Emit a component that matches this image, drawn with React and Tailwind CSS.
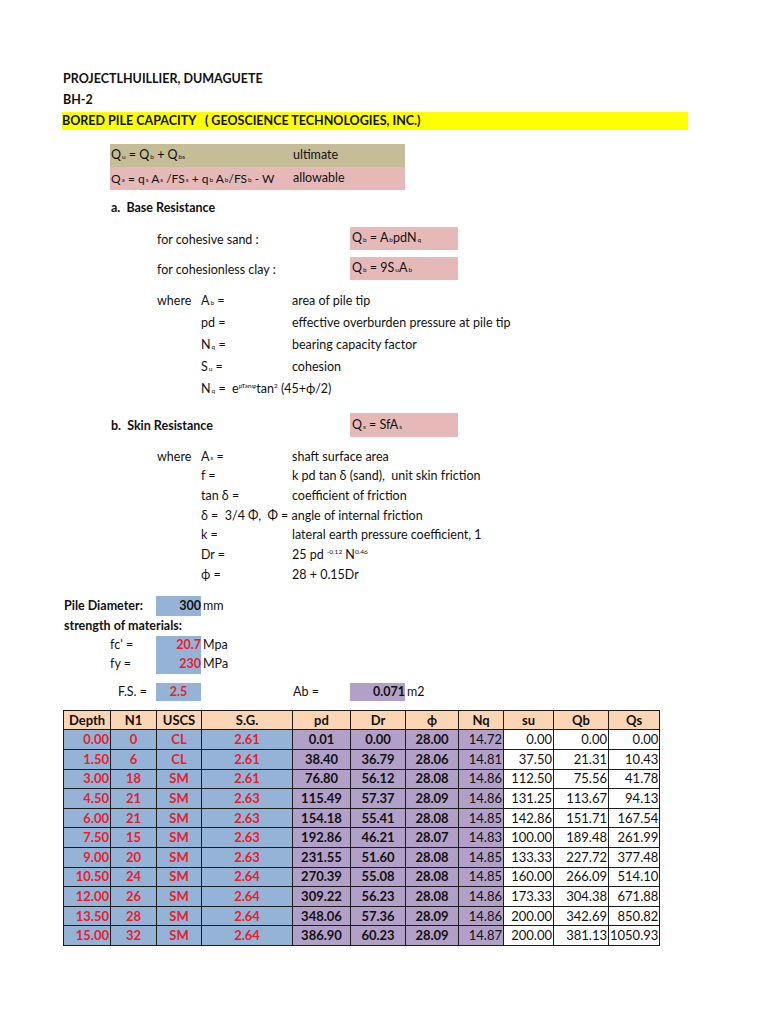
import React from 'react';

const GRID = 'grid grid-cols-[47px_46px_45px_91px_58px_55px_53px_45px_50px_55px_51px_29px]';

const RED = 'text-[#e8202a]';

function Row({ className = '', children }) {
  return <div className={`${GRID} ${className}`}>{children}</div>;
}

function Cell({ className = '', children }) {
  return <div className={`flex items-center whitespace-nowrap ${className}`}>{children}</div>;
}

const Sb = ({ children }) => <sub className="text-[6.5px] align-[-3px] ml-px">{children}</sub>;
const Sp = ({ children }) => <sup className="text-[6.5px] align-[5px]">{children}</sup>;

const HEAD = ['Depth', 'N1', 'USCS', 'S.G.', 'pd', 'Dr', 'ϕ', 'Nq', 'su', 'Qb', 'Qs'];

const DATA = [
  ['0.00', '0', 'CL', '2.61', '0.01', '0.00', '28.00', '14.72', '0.00', '0.00', '0.00'],
  ['1.50', '6', 'CL', '2.61', '38.40', '36.79', '28.06', '14.81', '37.50', '21.31', '10.43'],
  ['3.00', '18', 'SM', '2.61', '76.80', '56.12', '28.08', '14.86', '112.50', '75.56', '41.78'],
  ['4.50', '21', 'SM', '2.63', '115.49', '57.37', '28.09', '14.86', '131.25', '113.67', '94.13'],
  ['6.00', '21', 'SM', '2.63', '154.18', '55.41', '28.08', '14.85', '142.86', '151.71', '167.54'],
  ['7.50', '15', 'SM', '2.63', '192.86', '46.21', '28.07', '14.83', '100.00', '189.48', '261.99'],
  ['9.00', '20', 'SM', '2.63', '231.55', '51.60', '28.08', '14.85', '133.33', '227.72', '377.48'],
  ['10.50', '24', 'SM', '2.64', '270.39', '55.08', '28.08', '14.85', '160.00', '266.09', '514.10'],
  ['12.00', '26', 'SM', '2.64', '309.22', '56.23', '28.08', '14.86', '173.33', '304.38', '671.88'],
  ['13.50', '28', 'SM', '2.64', '348.06', '57.36', '28.09', '14.86', '200.00', '342.69', '850.82'],
  ['15.00', '32', 'SM', '2.64', '386.90', '60.23', '28.09', '14.87', '200.00', '381.13', '1050.93'],
];

// per-column cell styling for the data rows
const COL_STYLE = [
  `bg-[#95b3d7] ${RED} font-bold text-right`,
  `bg-[#95b3d7] ${RED} font-bold text-center`,
  `bg-[#95b3d7] ${RED} font-bold text-center`,
  `bg-[#95b3d7] ${RED} font-bold text-center`,
  'bg-[#b1a0c7] font-bold text-center',
  'bg-[#b1a0c7] font-bold text-center',
  'bg-[#b1a0c7] font-bold text-center',
  'bg-[#b1a0c7] text-right',
  'bg-white text-right',
  'bg-white text-right',
  'bg-white text-right',
];

const WIDTHS = ['w-[47px]', 'w-[46px]', 'w-[45px]', 'w-[91px]', 'w-[58px]', 'w-[55px]', 'w-[53px]', 'w-[45px]', 'w-[50px]', 'w-[55px]', 'w-[51px]'];

function PileTable() {
  return (
    <table className="mt-[9px] border-collapse table-fixed text-[13px] leading-none text-[#111]">
      <colgroup>
        {WIDTHS.map((w, i) => <col key={i} className={w} />)}
      </colgroup>
      <thead>
        <tr>
          {HEAD.map(h => (
            <th key={h} className="h-[19.6px] p-0 border border-[#1c1c1c] bg-[#fcd5b4] font-bold text-center">{h}</th>
          ))}
        </tr>
      </thead>
      <tbody>
        {DATA.map((r, i) => (
          <tr key={i}>
            {r.map((v, j) => (
              <td key={j} className={`h-[19.6px] p-0 px-[1px] border border-[#1c1c1c] ${COL_STYLE[j]}`}>{v}</td>
            ))}
          </tr>
        ))}
      </tbody>
    </table>
  );
}

export default function App() {
  return (
    <div className="min-h-[1024px] w-[768px] bg-white pl-[63px] pt-[69px] text-[12.5px] leading-none text-[#111] font-['Lato','Liberation_Sans',sans-serif]">
      <Row className="h-[20px] font-bold">
        <Cell className="col-start-1 col-span-5">PROJECTLHUILLIER, DUMAGUETE</Cell>
      </Row>
      <Row className="h-[22px] font-bold">
        <Cell className="col-start-1">BH-2</Cell>
      </Row>
      <Row className="h-[18px] mt-[1px] font-bold">
        <Cell className="col-start-1 col-span-12 bg-[#ffff00] -ml-px">
          BORED PILE CAPACITY&nbsp;&nbsp;&nbsp;( GEOSCIENCE TECHNOLOGIES, INC.)
        </Cell>
      </Row>

      <Row className="h-[23px] mt-[14px]">
        <Cell className="col-start-2 col-span-3 bg-[#c4bd97] pl-[1px]">
          Q<Sb>u</Sb>&nbsp;= Q<Sb>b</Sb>&nbsp;+ Q<Sb>bs</Sb>
        </Cell>
        <Cell className="col-start-5 col-span-2 bg-[#c4bd97] pl-[1px]">ultimate</Cell>
      </Row>
      <Row className="h-[23px]">
        <Cell className="col-start-2 col-span-3 bg-[#e6b9b8] pl-[1px] text-[12px]">
          Q<Sb>a</Sb>&nbsp;= q<Sb>s</Sb>&nbsp;A<Sb>s</Sb>&nbsp;/FS<Sb>s</Sb>&nbsp;+ q<Sb>b</Sb>&nbsp;A<Sb>b</Sb>/FS<Sb>b</Sb>&nbsp;- W
        </Cell>
        <Cell className="col-start-5 col-span-2 bg-[#e6b9b8] pl-[1px]">allowable</Cell>
      </Row>

      <Row className="h-[20px] mt-[8px] font-bold">
        <Cell className="col-start-2 pl-[1px]">a.&nbsp;&nbsp;Base Resistance</Cell>
      </Row>
      <Row className="h-[23px] mt-[9px]">
        <Cell className="col-start-3 pl-[1px] pt-[3px]">for cohesive sand :</Cell>
        <Cell className="col-start-6 col-span-2 bg-[#e6b9b8] pl-[2px]">
          Q<Sb>b</Sb>&nbsp;= A<Sb>b</Sb>pdN<Sb>q</Sb>
        </Cell>
      </Row>
      <Row className="h-[23px] mt-[7px]">
        <Cell className="col-start-3 pl-[1px] pt-[3px]">for cohesionless clay :</Cell>
        <Cell className="col-start-6 col-span-2 bg-[#e6b9b8] pl-[2px]">
          Q<Sb>b</Sb>&nbsp;= 9S<Sb>u</Sb>A<Sb>b</Sb>
        </Cell>
      </Row>

      <div className="mt-[10px]">
        <Row className="h-[22px]">
          <Cell className="col-start-3 pl-[1px]">where</Cell>
          <Cell className="col-start-4">A<Sb>b</Sb>&nbsp;=</Cell>
          <Cell className="col-start-5">area of pile tip</Cell>
        </Row>
        <Row className="h-[22px]">
          <Cell className="col-start-4">pd =</Cell>
          <Cell className="col-start-5">effective overburden pressure at pile tip</Cell>
        </Row>
        <Row className="h-[22px]">
          <Cell className="col-start-4">N<Sb>q</Sb>&nbsp;=</Cell>
          <Cell className="col-start-5">bearing capacity factor</Cell>
        </Row>
        <Row className="h-[22px]">
          <Cell className="col-start-4">S<Sb>u</Sb>&nbsp;=</Cell>
          <Cell className="col-start-5">cohesion</Cell>
        </Row>
        <Row className="h-[22px]">
          <Cell className="col-start-4 col-span-3">
            N<Sb>q</Sb>&nbsp;=&nbsp;&nbsp;e<Sp>pTanφ</Sp>tan<Sp>2</Sp>&nbsp;(45+ϕ/2)
          </Cell>
        </Row>
      </div>

      <Row className="h-[24px] mt-[13px]">
        <Cell className="col-start-2 pl-[1px] pt-[3px] font-bold">b.&nbsp;&nbsp;Skin Resistance</Cell>
        <Cell className="col-start-6 col-span-2 bg-[#e6b9b8] pl-[2px]">
          Q<Sb>s</Sb>&nbsp;= SfA<Sb>s</Sb>
        </Cell>
      </Row>

      <div className="mt-[10px]">
        <Row className="h-[19.7px]">
          <Cell className="col-start-3 pl-[1px]">where</Cell>
          <Cell className="col-start-4">A<Sb>s</Sb>&nbsp;=</Cell>
          <Cell className="col-start-5">shaft surface area</Cell>
        </Row>
        <Row className="h-[19.7px]">
          <Cell className="col-start-4">f =</Cell>
          <Cell className="col-start-5">k pd tan δ (sand),&nbsp;&nbsp;unit skin friction</Cell>
        </Row>
        <Row className="h-[19.7px]">
          <Cell className="col-start-4">tan δ =</Cell>
          <Cell className="col-start-5">coefficient of friction</Cell>
        </Row>
        <Row className="h-[19.7px]">
          <Cell className="col-start-4 col-span-4">δ =&nbsp;&nbsp;3/4 Φ,&nbsp;&nbsp;Φ = angle of internal friction</Cell>
        </Row>
        <Row className="h-[19.7px]">
          <Cell className="col-start-4">k =</Cell>
          <Cell className="col-start-5">lateral earth pressure coefficient, 1</Cell>
        </Row>
        <Row className="h-[19.7px]">
          <Cell className="col-start-4">Dr =</Cell>
          <Cell className="col-start-5">25 pd&nbsp;<Sp>-0.12</Sp>&nbsp;N<Sp>0.46</Sp></Cell>
        </Row>
        <Row className="h-[19.7px]">
          <Cell className="col-start-4">ϕ =</Cell>
          <Cell className="col-start-5">28 + 0.15Dr</Cell>
        </Row>
      </div>

      <Row className="h-[20px] mt-[11px]">
        <Cell className="col-start-1 col-span-2 font-bold pl-[1px]">Pile Diameter:</Cell>
        <Cell className="col-start-3 bg-[#95b3d7] justify-end font-bold">300</Cell>
        <Cell className="col-start-4 pl-[2px]">mm</Cell>
      </Row>
      <Row className="h-[20px]">
        <Cell className="col-start-1 col-span-3 font-bold pl-[1px]">strength of materials:</Cell>
      </Row>
      <Row className="h-[19px]">
        <Cell className="col-start-2">fc&#39; =</Cell>
        <Cell className={`col-start-3 bg-[#95b3d7] justify-end font-bold ${RED}`}>20.7</Cell>
        <Cell className="col-start-4 pl-[2px]">Mpa</Cell>
      </Row>
      <Row className="h-[19px]">
        <Cell className="col-start-2">fy =</Cell>
        <Cell className={`col-start-3 bg-[#95b3d7] justify-end font-bold ${RED}`}>230</Cell>
        <Cell className="col-start-4 pl-[2px]">MPa</Cell>
      </Row>
      <Row className="h-[18px] mt-[9px]">
        <Cell className="col-start-2 pl-[8px]">F.S. =</Cell>
        <Cell className={`col-start-3 bg-[#95b3d7] justify-center font-bold ${RED}`}>2.5</Cell>
        <Cell className="col-start-5 pl-[1px]">Ab =</Cell>
        <Cell className="col-start-6 bg-[#b1a0c7] justify-end font-bold">0.071</Cell>
        <Cell className="col-start-7 pl-[2px]">m2</Cell>
      </Row>

      <PileTable />
    </div>
  );
}
